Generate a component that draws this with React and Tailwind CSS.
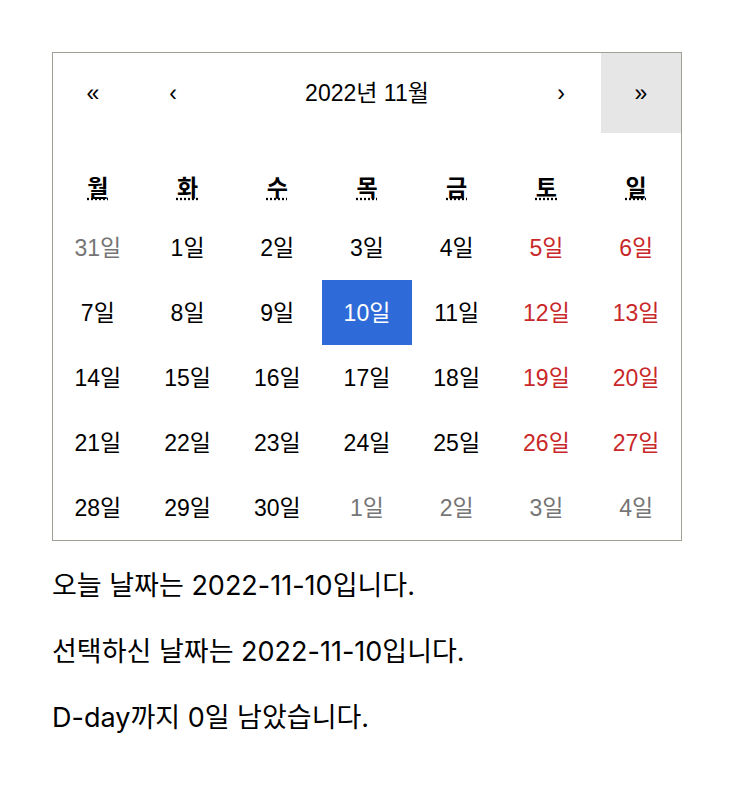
import React from "react";

const weekdays = ["월", "화", "수", "목", "금", "토", "일"];

const weeks = [
  [[31, "n"], [1], [2], [3], [4], [5, "w"], [6, "w"]],
  [[7], [8], [9], [10, "s"], [11], [12, "w"], [13, "w"]],
  [[14], [15], [16], [17], [18], [19, "w"], [20, "w"]],
  [[21], [22], [23], [24], [25], [26, "w"], [27, "w"]],
  [[28], [29], [30], [1, "n"], [2, "n"], [3, "n"], [4, "n"]],
];

function Tile({ d, t }) {
  let cls = "text-black";
  if (t === "n") cls = "text-[#757575]";
  if (t === "w") cls = "text-[#c9282a]";
  if (t === "s") cls = "bg-[#2f6bd8] text-white";
  return (
    <div className={`h-[65px] flex items-center justify-center ${cls}`}>
      {d}일
    </div>
  );
}

export default function App() {
  return (
    <div className="bg-white min-h-[786px] pl-[52px] pt-[52px]">
      <div
        className="w-[630px] border border-[#a0a096] bg-white text-[23px] leading-[26px]"
        style={{ fontFamily: '"Liberation Sans", "Noto Sans CJK KR", sans-serif' }}
      >
        <div className="flex h-[80px]">
          <div className="w-[80px] flex items-center justify-center">«</div>
          <div className="w-[80px] flex items-center justify-center">‹</div>
          <div className="flex-1 flex items-center justify-center">2022년 11월</div>
          <div className="w-[80px] flex items-center justify-center">›</div>
          <div className="w-[80px] flex items-center justify-center bg-[#e6e6e6]">»</div>
        </div>
        <div className="grid grid-cols-7 h-[82px] pt-[42px] font-bold">
          {weekdays.map((w) => (
            <div key={w} className="text-center">
              <abbr style={{ textDecorationLine: "underline", textDecorationStyle: "dotted", textUnderlineOffset: "2px" }}>
                {w}
              </abbr>
            </div>
          ))}
        </div>
        <div className="grid grid-cols-7">
          {weeks.flat().map(([d, t], i) => (
            <Tile key={i} d={d} t={t} />
          ))}
        </div>
      </div>
      <div
        className="mt-[24px] flex flex-col gap-[24px] text-[27px] leading-[42px] text-black"
        style={{ fontFamily: '"Inter", "Noto Sans CJK KR", sans-serif' }}
      >
        <p>오늘 날짜는 2022-11-10입니다.</p>
        <p>선택하신 날짜는 2022-11-10입니다.</p>
        <p>D-day까지 0일 남았습니다.</p>
      </div>
    </div>
  );
}
